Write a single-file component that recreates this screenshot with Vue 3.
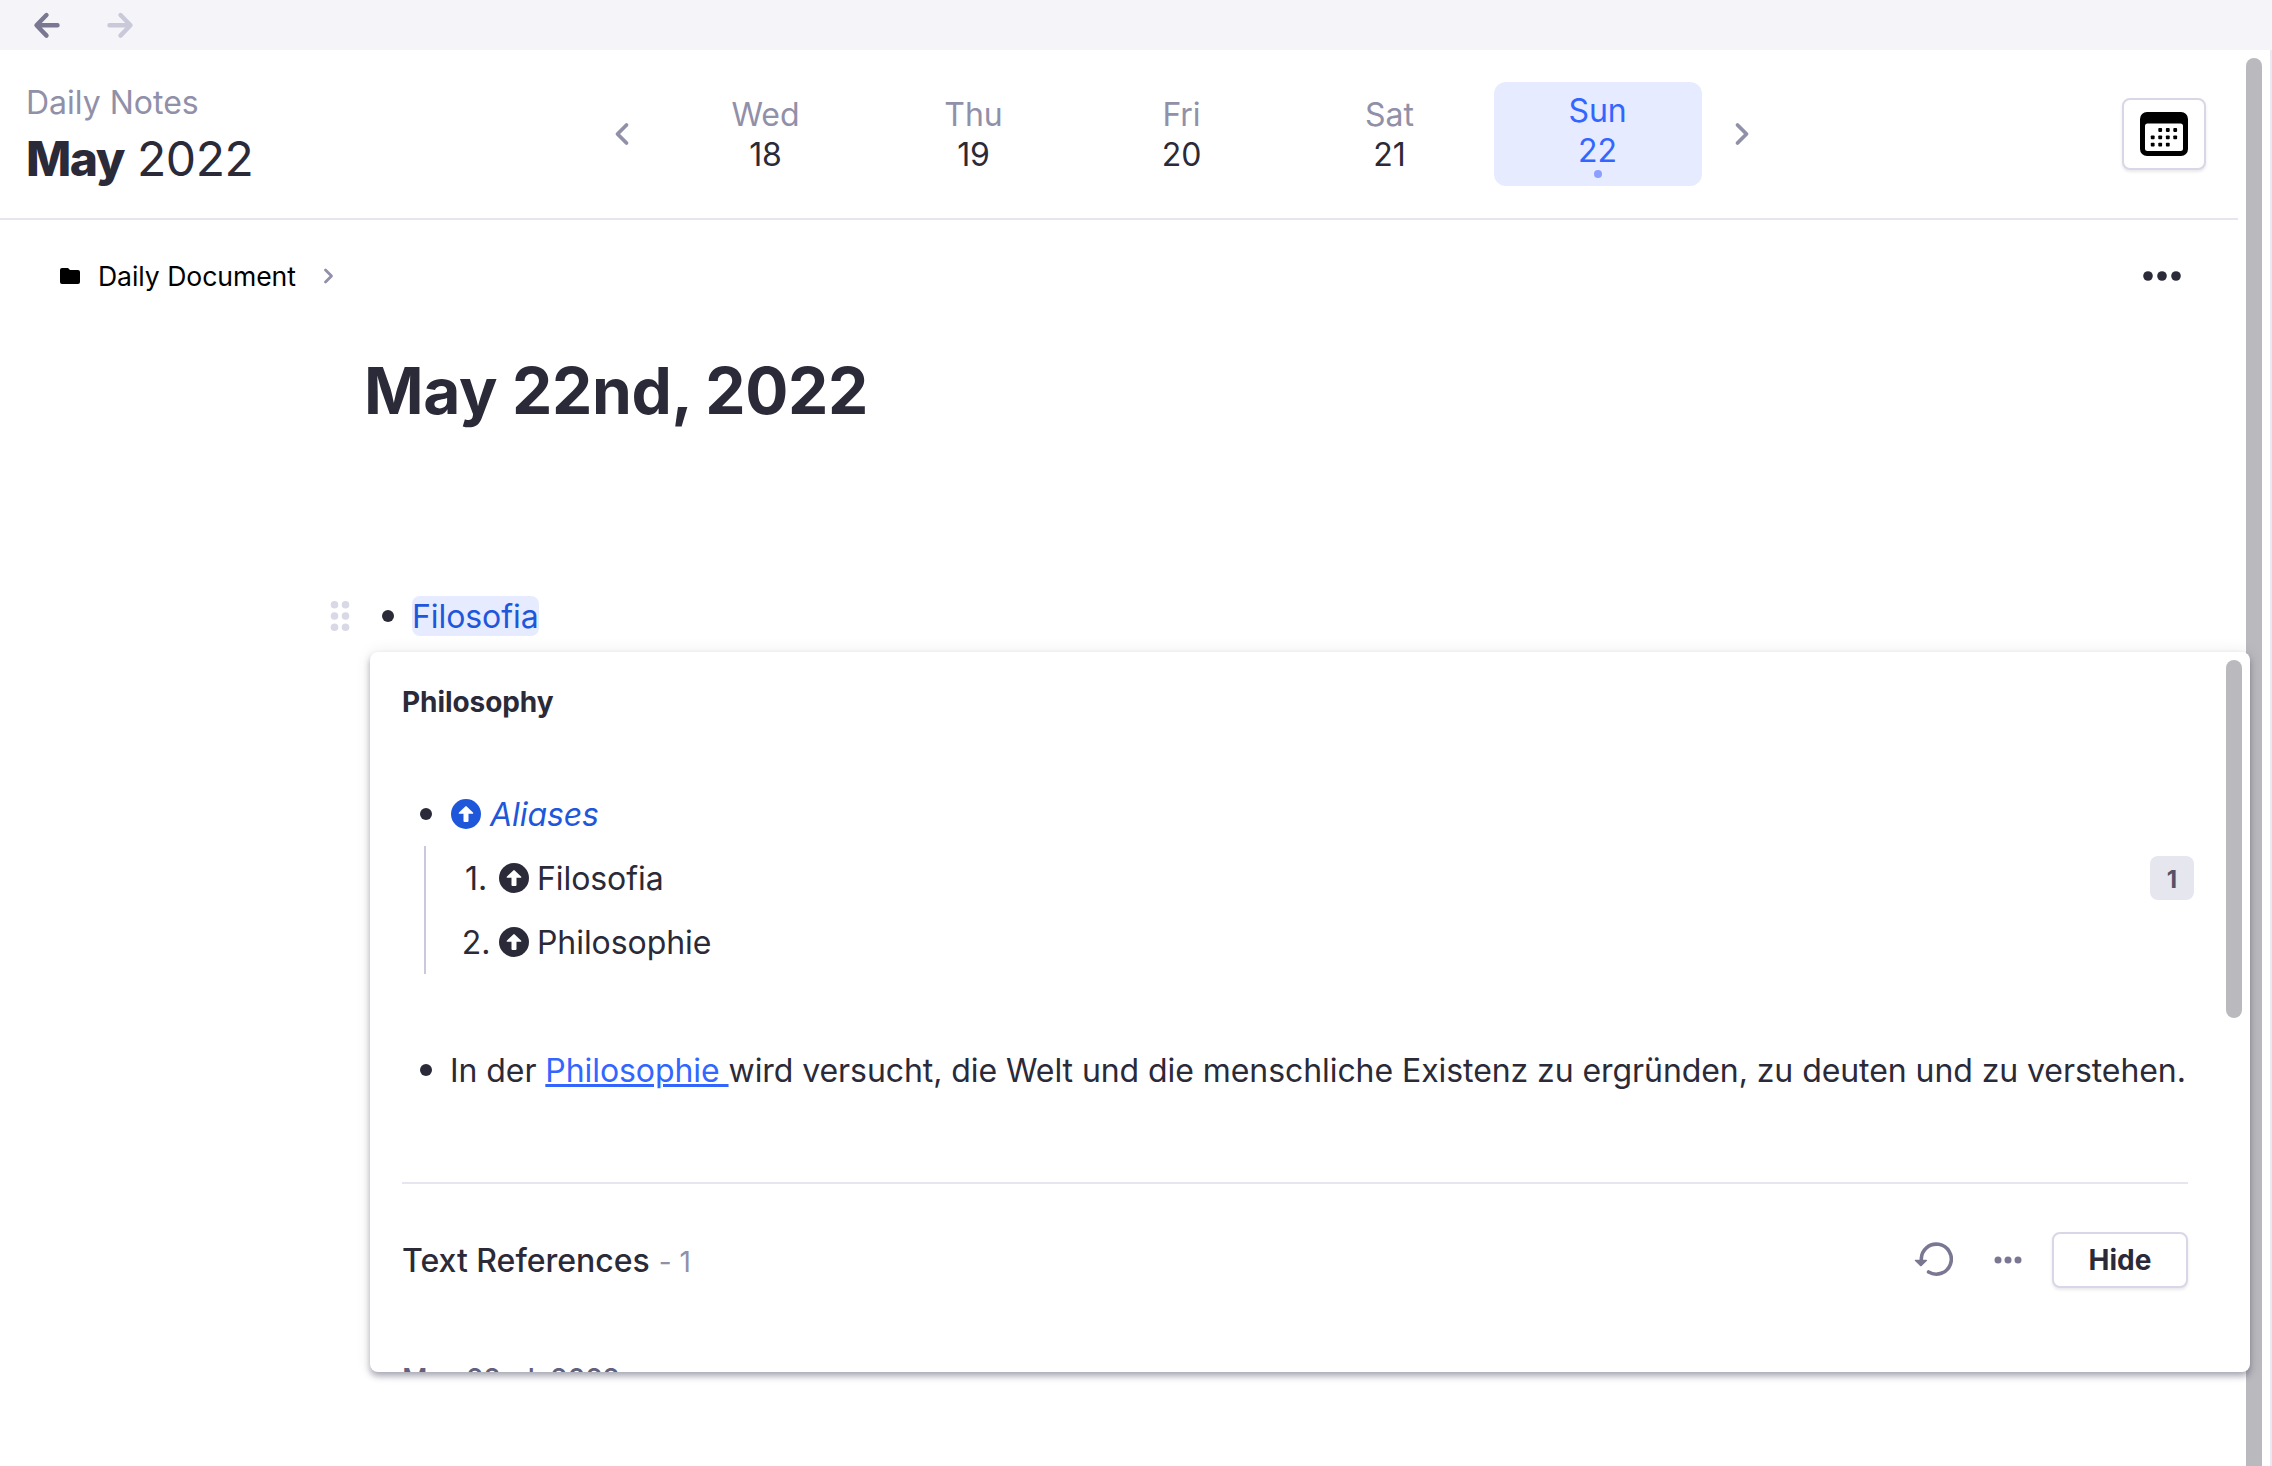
<template>
  <div class="app">
    <div class="topbar">
      <svg class="nav-arrow" viewBox="0 0 28 28" width="28" height="28">
        <path d="M24.5 14.3H4M13.5 4L3.5 14.3l10 10.3" />
      </svg>
      <svg class="nav-arrow nav-arrow--disabled" viewBox="0 0 28 28" width="28" height="28">
        <path d="M3.5 14.3H24M14.5 4l10 10.3-10 10.3" />
      </svg>
    </div>

    <div class="page">
      <main class="main">
        <header class="header">
          <div class="heading">
            <div class="heading__label">Daily Notes</div>
            <div class="heading__month"><b>May</b> 2022</div>
          </div>

          <div class="week">
            <svg class="chevron" viewBox="0 0 20 28" width="20" height="28">
              <path d="M14.5 5L5.5 14l9 9" />
            </svg>
            <div class="days">
              <div
                v-for="day in days"
                :key="day.number"
                class="day"
                :class="{ 'day--active': day.active }"
              >
                <span class="day__name">{{ day.name }}</span>
                <span class="day__number">{{ day.number }}</span>
                <span v-if="day.active" class="day__dot"></span>
              </div>
            </div>
            <svg class="chevron" viewBox="0 0 20 28" width="20" height="28">
              <path d="M5.5 5l9 9-9 9" />
            </svg>
          </div>

          <button class="button button--calendar">
            <svg viewBox="0 0 48 44" width="48" height="44">
              <rect width="48" height="44" rx="7" />
              <rect x="5" y="11.5" width="38" height="27.5" rx="2.5" fill="#fff" />
              <rect
                v-for="(dot, i) in calendarDots"
                :key="i"
                :x="dot[0] - 1.9"
                :y="dot[1] - 1.9"
                width="3.8"
                height="3.8"
                rx="0.8"
              />
            </svg>
          </button>
        </header>

        <div class="breadcrumb">
          <svg class="folder" viewBox="0 0 20 16" width="20" height="16">
            <path d="M2 0h6l2 2h8a2 2 0 0 1 2 2v10a2 2 0 0 1-2 2H2a2 2 0 0 1-2-2V2a2 2 0 0 1 2-2z" />
          </svg>
          <span class="breadcrumb__name">Daily Document</span>
          <svg class="breadcrumb__chevron" viewBox="0 0 12 18" width="12" height="18">
            <path d="M2.5 3l6 6-6 6" />
          </svg>
          <svg class="more" viewBox="0 0 40 12" width="40" height="12">
            <circle cx="6" cy="6" r="4.8" />
            <circle cx="20" cy="6" r="4.8" />
            <circle cx="34" cy="6" r="4.8" />
          </svg>
        </div>

        <h1 class="title">May 22nd, 2022</h1>

        <div class="block">
          <svg class="grip" viewBox="0 0 20 32" width="20" height="32">
            <template v-for="y in [4.7, 16, 27.3]" :key="y">
              <circle cx="4.5" :cy="y" r="3.8" />
              <circle cx="15.5" :cy="y" r="3.8" />
            </template>
          </svg>
          <span class="bullet"></span>
          <span class="mention">Filosofia</span>

          <div class="popup">
            <div class="popup__title">Philosophy</div>

            <div class="row">
              <span class="bullet"></span>
              <svg class="up up--link" viewBox="0 0 30 30" width="30" height="30">
                <circle cx="15" cy="15" r="15" />
                <path :d="arrowUp" />
              </svg>
              <em class="alias-link">Aliases</em>
            </div>

            <div class="aliases">
              <div v-for="(alias, i) in aliases" :key="alias" class="row row--alias">
                <span class="row__index">{{ i + 1 }}.</span>
                <svg class="up" viewBox="0 0 30 30" width="30" height="30">
                  <circle cx="15" cy="15" r="15" />
                  <path :d="arrowUp" />
                </svg>
                <span class="row__text">{{ alias }}</span>
                <span v-if="i === 0" class="badge">1</span>
              </div>
            </div>

            <div class="row row--sentence">
              <span class="bullet"></span>
              <p class="sentence">In der <a class="link">Philosophie&nbsp;</a>wird versucht, die Welt und die menschliche Existenz zu ergründen, zu deuten und zu verstehen.</p>
            </div>

            <div class="references">
              <span class="references__title">Text References</span>
              <span class="references__count">- 1</span>
              <svg class="refresh" viewBox="0 0 40 36" width="40" height="36">
                <path class="refresh__arc" d="M8.3 17.5A15 15 0 1 1 15.6 30" />
                <path class="refresh__tip" d="M2.2 17.8h11.4a.6.6 0 0 1 .4 1l-5.1 4.9a1.4 1.4 0 0 1-2 0l-5.1-4.9a.6.6 0 0 1 .4-1z" />
              </svg>
              <svg class="dots" viewBox="0 0 28 8" width="28" height="8">
                <circle cx="4" cy="4" r="3.5" />
                <circle cx="14" cy="4" r="3.5" />
                <circle cx="24" cy="4" r="3.5" />
              </svg>
              <button class="button button--hide">Hide</button>
            </div>

            <div class="reference-date">May 22nd, 2022</div>
            <div class="popup__scrollbar"></div>
          </div>
        </div>
      </main>

      <div class="scrollbar"></div>
    </div>
  </div>
</template>

<script setup>
const days = [
  { name: 'Wed', number: 18 },
  { name: 'Thu', number: 19 },
  { name: 'Fri', number: 20 },
  { name: 'Sat', number: 21 },
  { name: 'Sun', number: 22, active: true },
];

const aliases = ['Filosofia', 'Philosophie'];

const calendarDots = [
  [20.2, 18], [27.8, 18], [35.2, 18],
  [12.7, 25.3], [20.2, 25.3], [27.8, 25.3], [35.2, 25.3],
  [12.7, 32.7], [20.2, 32.7], [27.8, 32.7],
];

const arrowUp = 'M14.3 7.4a1 1 0 0 1 1.4 0l6.3 6.1c.6.6.3 1.3-.5 1.3h-4v7.2a1 1 0 0 1-1 1h-3a1 1 0 0 1-1-1v-7.2h-4c-.8 0-1.1-.7-.5-1.3z';
</script>

<style>
body {
  background: #fff;
  overflow: hidden;
}
</style>

<style scoped>
.app {
  width: 2272px;
  height: 1466px;
  display: flex;
  flex-direction: column;
  overflow: hidden;
  box-sizing: border-box;
  font-family: Inter, "Liberation Sans", sans-serif;
  font-size: 32px;
  line-height: 40px;
  letter-spacing: -0.07px;
  color: #2b2a38;
}

.topbar {
  flex: none;
  height: 50px;
  display: flex;
  align-items: center;
  gap: 45px;
  padding-left: 33px;
  background: #f4f4f9;
}

.nav-arrow {
  fill: none;
  stroke: #797791;
  stroke-width: 4.4;
  stroke-linecap: round;
  stroke-linejoin: round;
}

.nav-arrow--disabled {
  stroke: #cac9d9;
}

.page {
  flex: 1;
  min-height: 0;
  display: flex;
  border-right: 2px solid #e9e9f1;
}

.main {
  width: 2238px;
}

.scrollbar {
  width: 16px;
  margin: 8px 8px 0 8px;
  border-radius: 8px 8px 0 0;
  background: #bab9be;
}

.header {
  height: 170px;
  box-sizing: border-box;
  display: flex;
  align-items: center;
  padding: 0 32px 0 26px;
  border-bottom: 2px solid #e7e6ee;
}

.heading {
  width: 586px;
  padding-top: 6px;
}

.heading__label {
  color: #9190a9;
  letter-spacing: 0;
}

.heading__month {
  margin-top: 4px;
  font-size: 48px;
  line-height: 64px;
  letter-spacing: -0.4px;
}

.heading__month b {
  font-weight: 800;
  letter-spacing: -1.5px;
}

.week {
  flex: 1;
  display: flex;
  align-items: center;
}

.chevron {
  fill: none;
  stroke: #9190a9;
  stroke-width: 3.8;
  stroke-linecap: round;
  stroke-linejoin: round;
}

.days {
  display: flex;
  margin: 0 30px;
}

.day {
  width: 208px;
  height: 104px;
  display: flex;
  flex-direction: column;
  align-items: center;
  justify-content: center;
  border-radius: 12px;
}

.day__name {
  padding-right: 1px;
  color: #9190a9;
  line-height: 42px;
}

.day__number {
  padding-right: 1px;
  line-height: 38px;
}

.day--active {
  background: #e6ebff;
}

.day--active .day__name,
.day--active .day__number {
  color: #3366ff;
}

.day__dot {
  width: 8px;
  height: 8px;
  border-radius: 50%;
  background: #8a9fff;
}

.button {
  display: flex;
  align-items: center;
  justify-content: center;
  box-sizing: border-box;
  padding: 0;
  border: 2px solid #d9d7e7;
  border-radius: 8px;
  background: #fff;
  box-shadow: 0 2px 3px rgba(43, 42, 56, 0.1);
  color: #2b2a38;
  font-family: inherit;
  font-size: 28px;
  font-weight: 700;
}

.button--calendar {
  width: 84px;
  height: 72px;
}

.breadcrumb {
  height: 112px;
  display: flex;
  align-items: center;
  padding: 0 56px 0 60px;
}

.breadcrumb__name {
  width: 200px;
  margin-left: 18px;
  color: #000;
  font-size: 26.6px;
  white-space: nowrap;
}

.breadcrumb__chevron {
  margin-left: 25px;
  fill: none;
  stroke: #9190a9;
  stroke-width: 2.8;
  stroke-linecap: round;
  stroke-linejoin: round;
}

.more {
  margin-left: auto;
  fill: #2b2a38;
}

.title {
  margin: 19px 0 0 364px;
  font-size: 64px;
  line-height: 80px;
  font-weight: 700;
  letter-spacing: -0.35px;
}

.block {
  position: relative;
  display: flex;
  align-items: center;
  height: 64px;
  margin-top: 153px;
  padding-left: 330px;
}

.grip {
  fill: #d9d8e6;
}

.bullet {
  flex: none;
  width: 12px;
  height: 12px;
  border-radius: 50%;
  background: #2b2a38;
}

.block > .bullet {
  margin: 0 18px 0 32px;
}

.mention {
  padding-top: 1px;
  border-radius: 8px;
  background: #e6ebff;
  color: #1f57db;
  line-height: 39px;
}

/* preview card hovering over the document */
.popup {
  position: absolute;
  top: 68px;
  left: 370px;
  z-index: 1;
  width: 1880px;
  height: 720px;
  box-sizing: border-box;
  padding: 30px 62px 0 32px;
  overflow: hidden;
  border-radius: 8px;
  background: #fff;
  box-shadow: 0 4px 6px rgba(43, 42, 70, 0.38), 0 0 16px rgba(43, 42, 56, 0.09);
}

.popup__title {
  margin-bottom: 60px;
  font-size: 28px;
  font-weight: 700;
}

.row {
  display: flex;
  align-items: center;
  height: 64px;
  padding-left: 18px;
}

.up {
  flex: none;
  fill: #2b2a38;
}

.up path {
  fill: #fff;
}

.up--link {
  margin-left: 19px;
  fill: #1f57db;
}

.alias-link {
  margin-left: 9px;
  padding-top: 2px;
  color: #1f57db;
}

.aliases {
  margin-left: 22px;
  border-left: 2px solid #cac8da;
}

.row--alias {
  margin-right: -6px;
  padding-left: 34px;
}

.row__index {
  width: 32px;
  padding-top: 2px;
  text-align: center;
}

.row--alias .up {
  margin-left: 7px;
}

.row__text {
  margin-left: 8px;
  padding-top: 2px;
}

.badge {
  width: 44px;
  height: 44px;
  margin-left: auto;
  border-radius: 8px;
  background: #e6e6ef;
  color: #545268;
  font-size: 24px;
  line-height: 48px;
  font-weight: 700;
  text-align: center;
}

.row--sentence {
  margin-top: 64px;
}

.sentence {
  margin: 0 0 0 18px;
  padding-top: 2px;
  white-space: nowrap;
}

.link {
  color: #3366ff;
  text-decoration: underline;
}

.references {
  display: flex;
  align-items: center;
  height: 154px;
  box-sizing: border-box;
  margin-top: 80px;
  border-top: 2px solid #e7e6ee;
}

.references__title {
  padding-top: 2px;
  font-weight: 500;
  letter-spacing: 0;
}

.references__count {
  margin-left: 9px;
  padding-top: 4px;
  color: #9190a9;
  font-size: 28px;
}

.refresh {
  margin-left: auto;
}

.refresh__arc {
  fill: none;
  stroke: #797791;
  stroke-width: 3.6;
  stroke-linecap: round;
}

.refresh__tip {
  fill: #797791;
}

.dots {
  margin: 0 30px 0 41px;
  fill: #797791;
}

.button--hide {
  width: 136px;
  height: 56px;
}

.reference-date {
  margin-top: 23px;
  color: #62607c;
  font-size: 28px;
  font-weight: 500;
}

.popup__scrollbar {
  position: absolute;
  top: 8px;
  right: 8px;
  width: 16px;
  height: 358px;
  border-radius: 8px;
  background: #bab9be;
}
</style>
